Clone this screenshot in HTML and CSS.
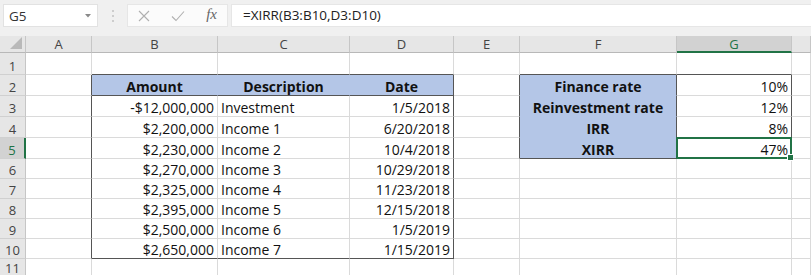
FILE: index.html
```html
<!DOCTYPE html>
<html lang="en">
<head>
    <meta charset="UTF-8">
    <title>XIRR - Sheet</title>
    <link rel="stylesheet" href="styles.css">
</head>
<body>
    <div id="formula-bar">
        <div class="name-box">
            <span>G5</span>
            <svg class="drop" width="6" height="4" viewBox="0 0 6 4"><polygon points="0,0 6,0 3,3.5" fill="#8a8a8a"/></svg>
        </div>
        <div class="grip">
            <svg width="4" height="14" viewBox="0 0 4 14"><circle cx="2" cy="2" r="1" fill="#c2c2c2"/><circle cx="2" cy="7" r="1" fill="#c2c2c2"/><circle cx="2" cy="12" r="1" fill="#c2c2c2"/></svg>
        </div>
        <div class="fx-box">
            <svg width="12" height="12" viewBox="0 0 12 12"><path d="M1 1 L11 11 M11 1 L1 11" stroke="#b0b0b0" stroke-width="1.1" fill="none"/></svg>
            <svg width="14" height="12" viewBox="0 0 14 12"><path d="M1 6.5 L5 10.5 L13 1.5" stroke="#b0b0b0" stroke-width="1.1" fill="none"/></svg>
            <span class="fx">fx</span>
        </div>
        <div class="formula">=XIRR(B3:B10,D3:D10)</div>
    </div>

    <div id="sheet">
        <!-- column headers -->
        <div class="corner">
            <svg width="12" height="12" viewBox="0 0 12 12"><polygon points="12,0 12,12 0,12" fill="#b9b9b9"/></svg>
        </div>
        <div class="ch">A</div>
        <div class="ch">B</div>
        <div class="ch">C</div>
        <div class="ch">D</div>
        <div class="ch">E</div>
        <div class="ch">F</div>
        <div class="ch sel-col">G</div>
        <div class="ch"></div>

        <!-- row 1 -->
        <div class="rh">1</div>
        <div class="c"></div>
        <div class="c bB"></div>
        <div class="c bB"></div>
        <div class="c bB"></div>
        <div class="c"></div>
        <div class="c bB"></div>
        <div class="c bB"></div>
        <div class="c"></div>

        <!-- row 2 -->
        <div class="rh">2</div>
        <div class="c bR"></div>
        <div class="c hd ctr b bB">Amount</div>
        <div class="c hd ctr b bB">Description</div>
        <div class="c hd ctr b bB bR">Date</div>
        <div class="c bR"></div>
        <div class="c hd ctr b bR">Finance rate</div>
        <div class="c r bR">10%</div>
        <div class="c"></div>

        <!-- row 3 -->
        <div class="rh">3</div>
        <div class="c bR"></div>
        <div class="c r">-$12,000,000</div>
        <div class="c">Investment</div>
        <div class="c r bR">1/5/2018</div>
        <div class="c bR"></div>
        <div class="c hd ctr b bR">Reinvestment rate</div>
        <div class="c r bR">12%</div>
        <div class="c"></div>

        <!-- row 4 -->
        <div class="rh">4</div>
        <div class="c bR"></div>
        <div class="c r">$2,200,000</div>
        <div class="c">Income 1</div>
        <div class="c r bR">6/20/2018</div>
        <div class="c bR"></div>
        <div class="c hd ctr b bR">IRR</div>
        <div class="c r bR">8%</div>
        <div class="c"></div>

        <!-- row 5 -->
        <div class="rh sel-row">5</div>
        <div class="c bR"></div>
        <div class="c r">$2,230,000</div>
        <div class="c">Income 2</div>
        <div class="c r bR">10/4/2018</div>
        <div class="c bR"></div>
        <div class="c hd ctr b bR bB">XIRR</div>
        <div class="c r bR bB active">47%</div>
        <div class="c"></div>

        <!-- row 6 -->
        <div class="rh">6</div>
        <div class="c bR"></div>
        <div class="c r">$2,270,000</div>
        <div class="c">Income 3</div>
        <div class="c r bR">10/29/2018</div>
        <div class="c"></div>
        <div class="c"></div>
        <div class="c"></div>
        <div class="c"></div>

        <!-- row 7 -->
        <div class="rh">7</div>
        <div class="c bR"></div>
        <div class="c r">$2,325,000</div>
        <div class="c">Income 4</div>
        <div class="c r bR">11/23/2018</div>
        <div class="c"></div>
        <div class="c"></div>
        <div class="c"></div>
        <div class="c"></div>

        <!-- row 8 -->
        <div class="rh">8</div>
        <div class="c bR"></div>
        <div class="c r">$2,395,000</div>
        <div class="c">Income 5</div>
        <div class="c r bR">12/15/2018</div>
        <div class="c"></div>
        <div class="c"></div>
        <div class="c"></div>
        <div class="c"></div>

        <!-- row 9 -->
        <div class="rh">9</div>
        <div class="c bR"></div>
        <div class="c r">$2,500,000</div>
        <div class="c">Income 6</div>
        <div class="c r bR">1/5/2019</div>
        <div class="c"></div>
        <div class="c"></div>
        <div class="c"></div>
        <div class="c"></div>

        <!-- row 10 -->
        <div class="rh">10</div>
        <div class="c bR"></div>
        <div class="c r bB">$2,650,000</div>
        <div class="c bB">Income 7</div>
        <div class="c r bR bB">1/15/2019</div>
        <div class="c"></div>
        <div class="c"></div>
        <div class="c"></div>
        <div class="c"></div>

        <!-- row 11 -->
        <div class="rh rh-last">11</div>
        <div class="c"></div>
        <div class="c"></div>
        <div class="c"></div>
        <div class="c"></div>
        <div class="c"></div>
        <div class="c"></div>
        <div class="c"></div>
        <div class="c"></div>
    </div>
</body>
</html>
```

FILE: styles.css
```css
* {
    box-sizing: border-box;
}
body {
    margin: 0;
    height: 275px;
    overflow: hidden;
    background: #fff;
    font-family: 'Open Sans', 'Liberation Sans', sans-serif;
}

/* formula bar */
#formula-bar {
    height: 36px;
    background: #f0f0f0;
    display: flex;
    align-items: flex-start;
    padding-top: 4px;
}
.name-box {
    margin-left: 3px;
    width: 95px;
    height: 23px;
    background: #fff;
    border: 1px solid #e2e2e2;
    display: flex;
    align-items: center;
    justify-content: space-between;
    padding: 0 6px 0 5px;
    font-size: 13.5px;
    color: #333;
}
.grip {
    width: 29px;
    height: 23px;
    display: flex;
    align-items: center;
    justify-content: center;
}
.fx-box {
    width: 101px;
    height: 23px;
    background: #fbfbfb;
    border: 1px solid #e6e6e6;
    display: flex;
    align-items: center;
    justify-content: space-between;
    padding: 0 10px 0 10px;
}
.fx {
    font-family: 'Liberation Serif', serif;
    font-style: italic;
    font-size: 15px;
    color: #666;
    margin-top: -2px;
}
.formula {
    flex: 1;
    margin-left: 3px;
    height: 23px;
    background: #fff;
    border: 1px solid #e6e6e6;
    border-right: none;
    padding-left: 11px;
    font-size: 13.5px;
    line-height: 20px;
    color: #222;
}

/* grid */
#sheet {
    display: grid;
    grid-template-columns: 26px 66px 126px 132px 104px 66px 157px 115px 1fr;
    grid-template-rows: 17px 22px 21px 21px 21px 21px 20px 20px 20px 20px 20px 1fr;
    height: 239px;
}
.corner {
    background: #e6e6e6;
    border-right: 1px solid #c6c6c6;
    border-bottom: 1px solid #b8b8b8;
    display: flex;
    align-items: flex-end;
    justify-content: flex-end;
    padding: 0 3px 3px 0;
}
.ch {
    background: #e6e6e6;
    border-right: 1px solid #c6c6c6;
    border-bottom: 1px solid #b8b8b8;
    text-align: center;
    font-size: 13px;
    line-height: 16px;
    color: #444;
}
.ch.sel-col {
    background: #d2d2d2;
    border-bottom: 2px solid #217346;
    color: #217346;
}
.rh {
    background: #e6e6e6;
    border-right: 1px solid #c6c6c6;
    border-bottom: 1px solid #d0d0d0;
    display: flex;
    align-items: flex-end;
    justify-content: center;
    font-size: 13px;
    line-height: 16px;
    color: #444;
}
.rh.rh-last {
    align-items: flex-start;
    padding-top: 1px;
}
.rh.sel-row {
    background: #d2d2d2;
    border-right: 2px solid #217346;
    color: #217346;
}
.c {
    border-right: 1px solid #dadada;
    border-bottom: 1px solid #dadada;
    display: flex;
    align-items: flex-end;
    padding: 0 3px;
    font-size: 14px;
    line-height: 16px;
    color: #111;
    white-space: nowrap;
    position: relative;
}
.r {
    justify-content: flex-end;
}
.ctr {
    justify-content: center;
}
.b {
    font-weight: bold;
}
.hd {
    background: #b4c6e7;
    border-right-color: #b4c6e7;
    border-bottom-color: #b4c6e7;
}
.c.bR {
    border-right-color: #555;
}
.c.bB {
    border-bottom-color: #555;
}

/* active cell */
.active::after {
    content: "";
    position: absolute;
    top: -1px;
    left: -1px;
    right: -1px;
    bottom: -1px;
    border: 2px solid #217346;
}
.active::before {
    content: "";
    position: absolute;
    right: -3px;
    bottom: -3px;
    width: 5px;
    height: 5px;
    background: #217346;
    border: 1px solid #fff;
    z-index: 2;
}
```
